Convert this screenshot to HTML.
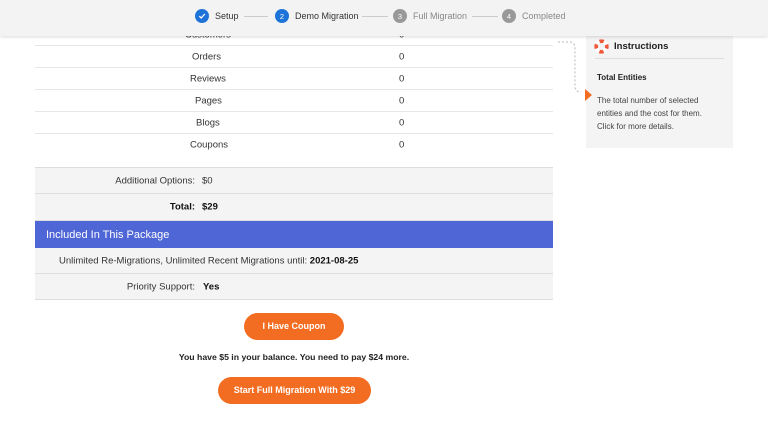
<!DOCTYPE html>
<html><head><style>
*{margin:0;padding:0;box-sizing:border-box}
body{width:768px;height:424px;background:#fff;font-family:"Liberation Sans",sans-serif;position:relative;overflow:hidden;color:#333}
.hdr{position:absolute;left:0;top:0;width:768px;height:36px;background:#f3f3f3;box-shadow:0 1px 3px rgba(0,0,0,.15);z-index:5}
.st{position:absolute;top:9px;font-size:9px;color:#333;display:flex;align-items:center;white-space:nowrap}
.c{width:14px;height:14px;border-radius:50%;color:#fff;font-size:7.5px;display:flex;align-items:center;justify-content:center;margin-right:6px}
.ln{position:absolute;top:16px;height:1px;background:#ccc}
.row{position:absolute;left:35px;width:518px;font-size:9.5px;color:#333;border-bottom:1px solid #e6e6e6}
.row span{position:absolute;top:50%;transform:translateY(-50%);white-space:nowrap}
.g{background:#f4f4f4;border-bottom:1px solid #ddd}
.btn{position:absolute;background:#f26d21;color:#fff;font-size:9px;font-weight:bold;border-radius:14px;text-align:center;line-height:27px}
</style></head><body>
<div class="hdr">
<div class="st" style="left:195px"><div class="c" style="background:#1e73d9"><svg width="8" height="8" viewBox="0 0 8 8"><path d="M1.3 4.2 L3.2 6 L6.8 2" stroke="#fff" stroke-width="1.3" fill="none"/></svg></div>Setup</div>
<div class="ln" style="left:244px;width:24px"></div>
<div class="st" style="left:275px"><div class="c" style="background:#1e73d9">2</div>Demo Migration</div>
<div class="ln" style="left:362px;width:26px"></div>
<div class="st" style="left:393px;color:#888"><div class="c" style="background:#999">3</div>Full Migration</div>
<div class="ln" style="left:472px;width:26px"></div>
<div class="st" style="left:502px;color:#888"><div class="c" style="background:#999">4</div>Completed</div>
</div>
<div class="row" style="top:24px;height:22px"><span style="left:150px">Customers</span><span style="left:364px">0</span></div>
<div class="row" style="top:46px;height:22px"><span style="left:157px">Orders</span><span style="left:364px">0</span></div>
<div class="row" style="top:68px;height:22px"><span style="left:155px">Reviews</span><span style="left:364px">0</span></div>
<div class="row" style="top:90px;height:22px"><span style="left:160px">Pages</span><span style="left:364px">0</span></div>
<div class="row" style="top:112px;height:22px"><span style="left:161px">Blogs</span><span style="left:364px">0</span></div>
<div class="row" style="top:134px;height:22px;border:none"><span style="left:155px">Coupons</span><span style="left:364px">0</span></div>
<div class="row g" style="top:167px;height:27px;border-top:1px solid #ddd"><span style="right:358px">Additional Options:</span><span style="left:167px">$0</span></div>
<div class="row g" style="top:194px;height:27px"><span style="right:358px;font-weight:bold;color:#111">Total:</span><span style="left:167px;font-weight:bold;color:#111">$29</span></div>
<div class="row" style="top:221px;height:27px;background:#4f66d6;color:#fff;font-size:11px;border:none"><span style="left:11px">Included In This Package</span></div>
<div class="row g" style="top:248px;height:26px"><span style="left:24px">Unlimited Re-Migrations, Unlimited Recent Migrations until: <b style="color:#111">2021-08-25</b></span></div>
<div class="row g" style="top:274px;height:26px"><span style="right:358px">Priority Support:</span><span style="left:168px;font-weight:bold;color:#111">Yes</span></div>
<div class="btn" style="left:244px;top:313px;width:100px">I Have Coupon</div>
<div style="position:absolute;left:0;width:588px;top:352px;text-align:center;font-size:8.7px;font-weight:bold;color:#222">You have $5 in your balance. You need to pay $24 more.</div>
<div class="btn" style="left:218px;top:377px;width:153px">Start Full Migration With $29</div>
<svg style="position:absolute;left:555px;top:38px" width="32" height="66"><path d="M3 4 H14 Q20 4 20 10 V48 Q20 54 26 54" stroke="#bbb" stroke-dasharray="2 2" fill="none"/></svg>
<div style="position:absolute;left:586px;top:36px;width:147px;height:112px;background:#f4f4f4">
<svg style="position:absolute;left:8px;top:3px" width="15" height="15" viewBox="0 0 14 14"><circle cx="7" cy="7" r="5" stroke="#fff" stroke-width="3.4" fill="none"/><circle cx="7" cy="7" r="5" stroke="#f05a3c" stroke-width="3.4" fill="none" stroke-dasharray="4 3.85" stroke-dashoffset="2"/></svg>
<div style="position:absolute;left:28px;top:5px;font-size:9.5px;font-weight:bold;color:#222">Instructions</div>
<div style="position:absolute;left:9px;top:22px;width:129px;height:1px;background:#ddd"></div>
<div style="position:absolute;left:11px;top:37px;font-size:8px;font-weight:bold;color:#222">Total Entities</div>
<div style="position:absolute;left:11px;top:58px;font-size:8px;line-height:13px;color:#444;width:118px">The total number of selected entities and the cost for them. Click for more details.</div>
</div>
<div style="position:absolute;left:585px;top:89px;width:0;height:0;border-left:7px solid #f26d21;border-top:6px solid transparent;border-bottom:6px solid transparent"></div>
</body></html>
